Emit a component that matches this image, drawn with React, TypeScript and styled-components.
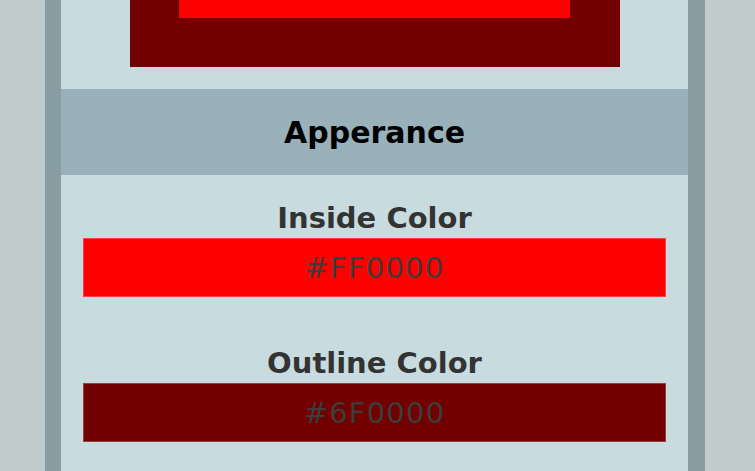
import React from "react";
import styled, { createGlobalStyle } from "styled-components";

const Global = createGlobalStyle`
  html, body {
    margin: 0;
    padding: 0;
    background: #c1cbcb;
    font-family: "DejaVu Sans", "Open Sans", sans-serif;
  }
  * { box-sizing: border-box; }
`;

const Page = styled.div`
  display: flex;
  justify-content: center;
  height: 471px;
  overflow: hidden;
`;

const Panel = styled.div`
  width: 660px;
  margin-left: -5px;
  border-left: 16px solid #879da2;
  border-right: 17px solid #879da2;
  background: #c8dcdf;
  display: flex;
  flex-direction: column;
`;

const Preview = styled.div`
  display: flex;
  justify-content: center;
  padding-bottom: 22px;
`;

const OuterShape = styled.div<{ $color: string }>`
  width: 490px;
  height: 67px;
  background: ${(p) => p.$color};
  display: flex;
  justify-content: center;
  align-items: flex-start;
`;

const InnerShape = styled.div<{ $color: string }>`
  width: 391px;
  height: 18px;
  background: ${(p) => p.$color};
`;

const SectionHeader = styled.div`
  height: 86px;
  background: #98b1ba;
  display: flex;
  align-items: center;
  justify-content: center;
  font-size: 30px;
  font-weight: 700;
  color: #000;
`;

const Fields = styled.div`
  display: flex;
  flex-direction: column;
  padding: 23px 22px 0;
  gap: 46px;
`;

const Field = styled.div`
  display: flex;
  flex-direction: column;
  align-items: stretch;
`;

const Label = styled.div`
  text-align: center;
  font-size: 29px;
  font-weight: 700;
  color: #333;
  line-height: 40px;
  height: 40px;
`;

const ColorInput = styled.input<{ $bg: string }>`
  height: 59px;
  width: 100%;
  border: 1px solid rgba(255, 255, 255, 0.25);
  background: ${(p) => p.$bg};
  color: #3d3d3d;
  font-family: "DejaVu Sans", "Open Sans", sans-serif;
  font-size: 29px;
  letter-spacing: 1.2px;
  text-align: center;
  outline: none;
  padding: 0;
`;

export default function App() {
  const inside = "#FF0000";
  const outline = "#6F0000";
  return (
    <>
      <Global />
      <Page>
        <Panel>
          <Preview>
            <OuterShape $color="#720000">
              <InnerShape $color="#ff0000" />
            </OuterShape>
          </Preview>
          <SectionHeader>Apperance</SectionHeader>
          <Fields>
            <Field>
              <Label>Inside Color</Label>
              <ColorInput $bg="#ff0000" defaultValue={inside} readOnly />
            </Field>
            <Field>
              <Label>Outline Color</Label>
              <ColorInput $bg="#720000" defaultValue={outline} readOnly />
            </Field>
          </Fields>
        </Panel>
      </Page>
    </>
  );
}
